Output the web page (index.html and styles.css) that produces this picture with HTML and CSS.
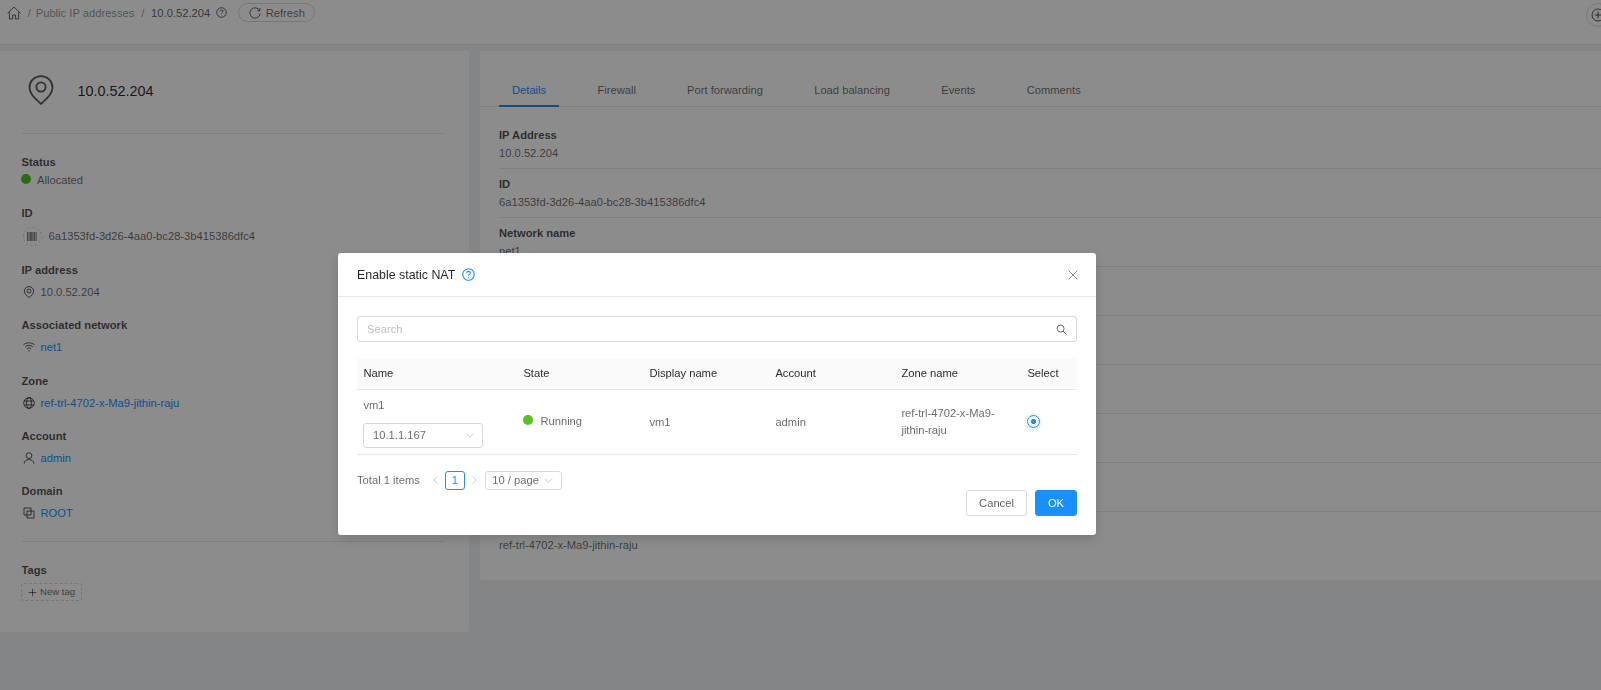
FILE: index.html
```html
<!DOCTYPE html>
<html lang="en">
<head>
<meta charset="utf-8">
<title>10.0.52.204</title>
<link rel="stylesheet" href="styles.css">
</head>
<body>
<div class="app">
  <header class="topbar">
    <nav class="crumbs">
      <svg class="ic home" viewBox="0 0 14 14"><path d="M.6 7.200 7 1l6.400 6.200M2.400 6v7h3.200V9h2.800v4h3.200V6"/></svg>
      <span class="sep">/</span><span class="crumb-link">Public IP addresses</span><span class="sep">/</span><span class="crumb-cur">10.0.52.204</span>
      <svg class="ic help" viewBox="0 0 12 12"><circle cx="6" cy="6" r="5.200"/><path d="M4.400 4.700c0-2.100 3.300-2.100 3.300-.1 0 1.200-1.700 1.200-1.700 2.600"/><circle class="dot-f" cx="6" cy="8.900" r=".5"/></svg>
      <button class="refresh"><svg class="ic reload" viewBox="0 0 12 12"><path d="M10.600 3.500A5.200 5.200 0 1 0 11.200 6.500M10.900 1v2.800H8.200"/></svg>Refresh</button>
    </nav>
    <button class="round"><svg class="ic plusc" viewBox="0 0 14 14"><circle cx="7" cy="7" r="6"/><path d="M7 3.600v6.800M3.600 7h6.800"/></svg></button>
  </header>
  <main class="main">
    <aside class="card side">
      <div class="head">
        <svg class="ic pin" viewBox="0 0 26 30"><path d="M13 1.200C6.600 1.200 1.500 6.200 1.500 12.400c0 6.800 6.200 11.400 11.500 16.400 5.300-5 11.500-9.600 11.500-16.400C24.500 6.200 19.400 1.200 13 1.200Z"/><circle cx="13" cy="12" r="4.600"/></svg>
        <span class="head-title">10.0.52.204</span>
      </div>
      <div class="rule"></div>
      <section class="sec"><div class="lab">Status</div><div class="val tight"><i class="dot"></i>Allocated</div></section>
      <section class="sec"><div class="lab">ID</div><div class="val idv"><span class="bar-wrap"><svg class="bar" viewBox="0 0 10 9"><path d="M.5 0v9M2 0v9M3.500 0v9M4.700 0v9M6 0v9M7.500 0v9M9.200 0v9"/></svg></span>6a1353fd-3d26-4aa0-bc28-3b415386dfc4</div></section>
      <section class="sec"><div class="lab">IP address</div><div class="val"><svg class="ic vi" viewBox="0 0 12 12"><path d="M6 .6C3.300.6 1.300 2.700 1.300 5.200c0 2.800 2.600 4.500 4.700 6.300 2.100-1.800 4.700-3.500 4.700-6.300C10.700 2.700 8.700.6 6 .6Z"/><circle cx="6" cy="5" r="2"/></svg><span>10.0.52.204</span></div></section>
      <section class="sec"><div class="lab">Associated network</div><div class="val"><svg class="ic vi" viewBox="0 0 12 12"><path d="M.5 3.800c3-2.600 8-2.600 11 0M2.200 5.700c2.200-1.800 5.400-1.800 7.600 0M3.900 7.700c1.300-1 2.900-1 4.200 0"/><circle class="dot-f" cx="6" cy="9.700" r=".7"/></svg><a class="lnk">net1</a></div></section>
      <section class="sec"><div class="lab">Zone</div><div class="val"><svg class="ic vi" viewBox="0 0 12 12"><circle cx="6" cy="6" r="5.300"/><ellipse cx="6" cy="6" rx="2.400" ry="5.300"/><path d="M1 4h10M1 8h10"/></svg><a class="lnk">ref-trl-4702-x-Ma9-jithin-raju</a></div></section>
      <section class="sec"><div class="lab">Account</div><div class="val"><svg class="ic vi" viewBox="0 0 12 12"><circle cx="6" cy="3.700" r="2.900"/><path d="M1.200 11.500c0-5.200 9.600-5.200 9.600 0"/></svg><a class="lnk">admin</a></div></section>
      <section class="sec"><div class="lab">Domain</div><div class="val"><svg class="ic vi" viewBox="0 0 12 12"><path d="M3.800 8H1V1h7v3"/><path d="M4 4h7v7H4zM4 8h4V4"/></svg><a class="lnk">ROOT</a></div></section>
      <div class="rule second"></div>
      <section class="tags"><div class="lab">Tags</div><span class="newtag"><svg class="ic plus" viewBox="0 0 10 10"><path d="M5 .8v8.400M.8 5h8.400"/></svg>New tag</span></section>
    </aside>
    <section class="card detail">
      <div class="tabs">
        <span class="tab active">Details</span><span class="tab">Firewall</span><span class="tab">Port forwarding</span><span class="tab">Load balancing</span><span class="tab">Events</span><span class="tab">Comments</span>
      </div>
      <div class="rows">
        <div class="row"><div class="lab">IP Address</div><div>10.0.52.204</div></div>
        <div class="row"><div class="lab">ID</div><div>6a1353fd-3d26-4aa0-bc28-3b415386dfc4</div></div>
        <div class="row"><div class="lab">Network name</div><div>net1</div></div>
        <div class="row"></div>
        <div class="row"></div>
        <div class="row"></div>
        <div class="row"></div>
        <div class="row"></div>
        <div class="row last"><div class="lab">Zone name</div><div>ref-trl-4702-x-Ma9-jithin-raju</div></div>
      </div>
    </section>
  </main>
</div>
<div class="mask"></div>
<div class="dialog" role="dialog">
  <div class="dlg-head">
    <span class="dlg-title">Enable static NAT</span>
    <svg class="ic dlg-help" viewBox="0 0 12 12"><circle cx="6" cy="6" r="5.300"/><path d="M4.400 4.700c0-2.100 3.300-2.100 3.300-.1 0 1.200-1.700 1.200-1.700 2.600"/><circle class="dot-f" cx="6" cy="8.900" r=".5"/></svg>
    <svg class="ic close" viewBox="0 0 10 10"><path d="M.6.600l8.800 8.800M9.400.600.600 9.400"/></svg>
  </div>
  <div class="dlg-body">
    <div class="search"><span>Search</span><svg class="ic sicon" viewBox="0 0 12 12"><circle cx="5" cy="5" r="3.800"/><path d="M7.800 7.800 11.300 11.300"/></svg></div>
    <table class="tbl">
      <thead><tr><th class="c1">Name</th><th class="c2">State</th><th class="c2">Display name</th><th class="c2">Account</th><th class="c2">Zone name</th><th class="c3">Select</th></tr></thead>
      <tbody><tr>
        <td><div class="vm">vm1</div><div class="sel"><span>10.1.1.167</span><svg class="ic chev" viewBox="0 0 10 6"><path d="M.5.500 5 5.200 9.500.500"/></svg></div></td>
        <td><i class="dot run"></i>Running</td>
        <td class="mid">vm1</td>
        <td class="mid">admin</td>
        <td>ref-trl-4702-x-Ma9-jithin-raju</td>
        <td><span class="radio"></span></td>
      </tr></tbody>
    </table>
    <div class="pager">
      <span class="total">Total 1 items</span>
      <svg class="ic pg" viewBox="0 0 6 10"><path d="M5.500.5 1 5l4.500 4.500"/></svg>
      <span class="pnum">1</span>
      <svg class="ic pg" viewBox="0 0 6 10"><path d="M.5.500 5 5 .5 9.500"/></svg>
      <span class="psel">10 / page<svg class="ic chev small" viewBox="0 0 10 6"><path d="M.5.500 5 5.200 9.500.500"/></svg></span>
    </div>
    <div class="actions"><button class="btn">Cancel</button><button class="btn primary">OK</button></div>
  </div>
</div>
</body>
</html>
```
FILE: styles.css
```css
* { box-sizing: border-box; }
html, body { margin: 0; height: 100%; overflow: hidden; }
body { background: #f0f2f5; font: 11.2px/18px "Liberation Sans", Arial, sans-serif; color: rgba(0,0,0,.6); }
.app { height: 690px; overflow: hidden; }
.ic { fill: none; stroke: currentColor; stroke-width: 1; display: block; flex: none; }
.dot-f { fill: currentColor; stroke: none; }

.topbar { height: 45px; background: #fff; border-bottom: 1px solid #e8e8e8; display: flex; justify-content: space-between; align-items: flex-start; padding: 3px 0 0 7px; }
.crumbs { display: flex; align-items: center; height: 19px; }
.home { width: 14px; height: 14px; margin-top: 1px; color: rgba(0,0,0,.6); }
.sep { margin: 0 6.800px; color: rgba(0,0,0,.45); }
.crumb-link { margin-left: -2px; color: rgba(0,0,0,.45); }
.crumb-cur { color: rgba(0,0,0,.65); }
.help { width: 11px; height: 11px; margin-left: 6px; color: rgba(0,0,0,.65); }
.refresh { margin-left: 11px; height: 19px; width: 77px; padding: 0 0 0 9.500px; border: 1px solid #d9d9d9; border-radius: 10px; background: #fff; display: flex; align-items: center; font: inherit; color: rgba(0,0,0,.6); }
.reload { width: 12px; height: 12px; margin-right: 5px; }
.round { width: 24px; height: 24px; margin-right: -9px; padding: 0 0 0 4px; border: 1px solid #d9d9d9; border-radius: 50%; background: #fff; color: rgba(0,0,0,.65); flex: none; }
.plusc { width: 14px; height: 14px; }

.main { display: flex; align-items: flex-start; gap: 11px; padding-top: 6px; }
.card { background: #fff; border-radius: 2px; }
.side { width: 469px; height: 581px; flex: none; padding: 25px 24px 0 21.500px; }
.head { display: flex; align-items: center; height: 30px; padding-left: 6.500px; }
.pin { width: 26px; height: 30px; margin-bottom: 2px; stroke-width: 1.800; color: rgba(0,0,0,.65); }
.head-title { margin-left: 23.500px; font-size: 14.400px; color: rgba(0,0,0,.85); }
.rule { height: 1px; background: #e8e8e8; margin: 27px 0 19px; }
.sec { margin-bottom: 15.150px; }
.lab { font-weight: 700; color: rgba(0,0,0,.7); }
.val { margin-top: 4px; display: flex; align-items: center; }
.val.tight { margin-top: 0; }
.dot { width: 10px; height: 10px; border-radius: 50%; background: #52c41a; margin: 0 6px 2px -.5px; display: inline-block; flex: none; }
.idv { height: 20px; }
.bar-wrap { width: 19px; height: 19px; border: 1px dashed #d9d9d9; border-radius: 50%; margin: 0 7px 0 1px; display: flex; align-items: center; justify-content: center; }
.bar { width: 10px; height: 9px; stroke: rgba(0,0,0,.65); fill: none; stroke-width: .8; }
.vi { width: 12px; height: 12px; margin: 0 6px 0 1px; color: rgba(0,0,0,.65); }
.lnk { color: #1890ff; }
.rule.second { margin: 19.300px 0 19px; }
.newtag { margin: 4px 0 0 -.5px; width: 61px; height: 18px; border: 1px dashed #d9d9d9; border-radius: 3px; display: flex; align-items: center; padding-left: 6px; font-size: 9.600px; line-height: 16px; background: #fff; }
.plus { width: 9px; height: 9px; margin-right: 3px; }

.detail { flex: none; width: 1200px; height: 529px; padding-top: 27px; }
.tabs { display: flex; height: 29px; border-bottom: 1px solid #e8e8e8; padding-left: 19.200px; gap: 25.600px; }
.tab { padding: 3px 12.800px 0; height: 29px; }
.tab.active { color: #1890ff; border-bottom: 2px solid #1890ff; }
.rows { padding-top: 13px; }
.row { height: 49px; margin-left: 19px; padding: 6px 0 0 0; border-bottom: 1px solid #e8e8e8; }
.row.last { border-bottom: 0; }

.mask { position: fixed; inset: 0; background: rgba(0,0,0,.45); }
.dialog { position: fixed; left: 338px; top: 253px; width: 758px; height: 282px; background: #fff; border-radius: 3px; box-shadow: 0 4px 12px rgba(0,0,0,.15); }
.dlg-head { height: 44px; border-bottom: 1px solid #e8e8e8; display: flex; align-items: center; padding: 0 18px 0 19px; }
.dlg-title { font-size: 12.400px; color: rgba(0,0,0,.85); }
.dlg-help { width: 13px; height: 13px; margin-left: 7px; color: #1890ff; }
.close { width: 10px; height: 10px; margin-left: auto; color: rgba(0,0,0,.45); }
.dlg-body { padding: 19px 19px 0; }
.search { height: 26px; border: 1px solid #d9d9d9; border-radius: 3px; display: flex; align-items: center; justify-content: space-between; padding: 0 9px; color: #bfbfbf; }
.sicon { width: 11px; height: 11px; color: rgba(0,0,0,.65); }
.tbl { width: 720px; margin-top: 16px; border-collapse: collapse; table-layout: fixed; }
.tbl th { height: 31px; background: #fafafa; font-weight: 400; color: rgba(0,0,0,.85); text-align: left; padding: 0 6.400px; border-bottom: 1px solid #e8e8e8; }
.c1 { width: 160px; }
.c2 { width: 126px; }
.c3 { width: 56px; }
.tbl td { height: 65px; padding: 0 6.400px; border-bottom: 1px solid #e8e8e8; line-height: 17px; vertical-align: middle; }
.tbl td.mid { padding-top: 2px; }
.vm { margin-bottom: 9px; line-height: 18px; }
.sel { width: 120px; height: 25px; margin-left: -.4px; border: 1px solid #d9d9d9; border-radius: 3px; display: flex; align-items: center; justify-content: space-between; padding: 0 8px 0 9px; }
.chev { width: 8px; height: 5px; color: #bfbfbf; }
.run { margin: 0 7px 0 0; }
.radio { display: block; width: 13px; height: 13px; margin-left: 0; border: 1px solid #1890ff; border-radius: 50%; background: radial-gradient(circle, #1890ff 2.400px, #fff 2.900px); box-shadow: 0 0 0 2px rgba(24,144,255,.08); }
.pager { display: flex; align-items: center; height: 19px; margin-top: 16px; }
.total { margin-right: 13px; }
.pg { width: 5px; height: 8px; color: #bfbfbf; }
.pnum { width: 20px; height: 19px; margin: 0 7px; border: 1px solid #1890ff; border-radius: 3px; color: #1890ff; text-align: center; line-height: 17px; }
.psel { width: 77px; height: 19px; margin-left: 8px; border: 1px solid #d9d9d9; border-radius: 3px; display: flex; align-items: center; justify-content: space-between; padding: 0 8px 0 6.500px; }
.small { width: 9px; height: 5px; }
.actions { display: flex; justify-content: flex-end; gap: 8px; }
.btn { height: 26px; width: 61px; border: 1px solid #d9d9d9; border-radius: 3px; background: #fff; font: inherit; color: rgba(0,0,0,.65); padding: 0; }
.btn.primary { width: 42px; background: #1890ff; border-color: #1890ff; color: #fff; }
```
